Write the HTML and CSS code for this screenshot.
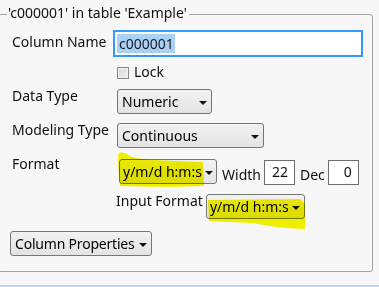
FILE: index.html
```html
<!DOCTYPE html>
<html>
<head>
<meta charset="utf-8">
<link rel="stylesheet" href="styles.css">
</head>
<body>
<div class="group">
  <div class="title">'c000001' in table 'Example'</div>
  <div class="row r1">
    <div class="label">Column Name</div>
    <div class="textbox"><span class="sel">c000001</span></div>
  </div>
  <div class="row r2">
    <span class="check"></span><span class="checklabel">Lock</span>
  </div>
  <div class="row r3">
    <div class="label">Data Type</div>
    <div class="combo w-numeric"><span>Numeric</span><i class="arrow"></i></div>
  </div>
  <div class="row r4">
    <div class="label">Modeling Type</div>
    <div class="combo w-cont"><span>Continuous</span><i class="arrow"></i></div>
  </div>
  <div class="row r5">
    <div class="label">Format</div>
    <div class="combo w-format"><span>y/m/d h:m:s</span><i class="arrow"></i></div>
    <span class="small-label lbl-width">Width</span>
    <div class="numbox">22</div>
    <span class="small-label lbl-dec">Dec</span>
    <div class="numbox">0</div>
  </div>
  <div class="row r6">
    <span class="inlabel">Input Format</span>
    <div class="combo w-input"><span>y/m/d h:m:s</span><i class="arrow"></i></div>
  </div>
  <div class="row r7">
    <div class="combo button"><span>Column Properties</span><i class="arrow"></i></div>
  </div>
</div>
<div class="bottomline"></div>
<svg class="marker" width="379" height="287" viewBox="0 0 379 287">
  <path d="M118,157 C118,151 123,151 128,155 C134,159 150,160 175,161 L203,162 L204,186 C180,187 150,187 120,186 C119,176 118,166 118,157 Z"/>
  <path d="M208,200 L300,199 L305,204 L305,229 C290,229 268,226 252,223 C235,222 220,222 209,221 Z"/>
</svg>
</body>
</html>
```

FILE: styles.css
```css
html, body {
  margin: 0;
  padding: 0;
}
body {
  width: 379px;
  height: 287px;
  overflow: hidden;
  position: relative;
  background: #f7f7f7;
  font-family: "Noto Sans", "Open Sans", sans-serif;
  font-size: 14px;
  line-height: 18px;
  color: #101010;
}
.group {
  box-sizing: border-box;
  width: 375px;
  height: 258px;
  margin: 14px 0 0 -2px;
  border: 1px solid #a3a3a3;
  border-radius: 3px;
  padding-left: 13px;
}
.title {
  width: fit-content;
  margin: -10px 0 0 -5px;
  padding: 0 2px 0 1px;
  background: #f7f7f7;
  line-height: 16px;
}
.row {
  display: flex;
  align-items: flex-start;
}
.label {
  width: 105px;
  flex: none;
}
.r1 { margin-top: 9px; height: 27px; }
.r1 .label { padding-top: 3px; }
.textbox {
  box-sizing: border-box;
  width: 250px;
  height: 27px;
  margin-left: -4px;
  border: 2px solid #3399ff;
  background: #fff;
  padding: 2px 0 0 2px;
}
.sel {
  display: inline-block;
  background: #a9d0f5;
  padding: 0 1px 0 2px;
  line-height: 19px;
  color: #1a1a1a;
}
.r2 { margin-top: 4px; height: 22px; padding-left: 105px; }
.check {
  box-sizing: border-box;
  width: 12px;
  height: 12px;
  margin-top: 6px;
  border: 1px solid #8a8a8a;
  background: linear-gradient(135deg, #d6d6d6, #f4f4f4);
  box-shadow: inset 0 0 0 1px #f2f2f2;
}
.checklabel { margin-left: 5px; margin-top: 2px; }
.r3 { margin-top: 4px; }
.r4 { margin-top: 7px; }
.r5 { margin-top: 7px; }
.r6 { margin-top: 7px; padding-left: 104px; }
.r7 { margin-top: 12px; }
.combo {
  box-sizing: border-box;
  height: 25px;
  margin-top: 2px;
  border: 1px solid #767676;
  border-radius: 3px;
  background: linear-gradient(#f2f2f2, #e3e3e3);
  display: flex;
  align-items: center;
  justify-content: space-between;
  padding: 1px 4px 0 4px;
  color: #000;
  white-space: nowrap;
}
.arrow {
  width: 0;
  height: 0;
  border-left: 4px solid transparent;
  border-right: 4px solid transparent;
  border-top: 4px solid #111;
  margin-top: 1px;
}
.w-numeric { width: 95px; }
.w-cont { width: 147px; }
.w-format { width: 98px; margin-top: 4px; margin-left: 2px; padding-left: 3px; padding-right: 3px; }
.w-input { width: 99px; margin-left: 3px; padding-left: 3px; padding-right: 4px; }
.button { width: 142px; margin-left: -2px; margin-top: 0; padding-left: 4px; padding-right: 4px; letter-spacing: -0.2px; }
.small-label { margin-top: 11px; }
.lbl-width { margin-left: 5px; margin-right: 3px; }
.lbl-dec { margin-left: 5px; margin-right: 3px; }
.numbox {
  box-sizing: border-box;
  width: 31px;
  height: 25px;
  margin-top: 5px;
  border: 1px solid #6e6e6e;
  background: #fff;
  text-align: right;
  padding: 2px 6px 0 0;
}
.inlabel { margin-top: 0; }
.bottomline {
  position: absolute;
  left: 0;
  right: 0;
  top: 285px;
  height: 2px;
  background: #bcd5ee;
}
.marker {
  position: absolute;
  left: 0;
  top: 0;
  pointer-events: none;
  mix-blend-mode: multiply;
}
.marker path {
  fill: #f6f600;
}
```
